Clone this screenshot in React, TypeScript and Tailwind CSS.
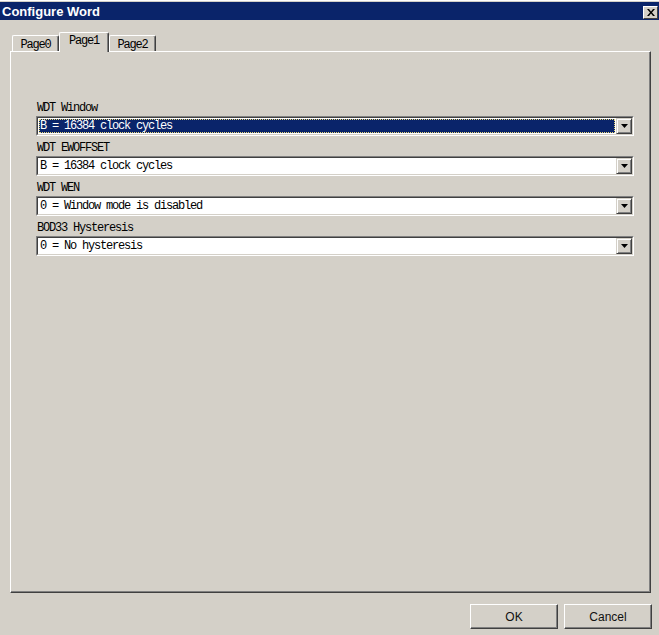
import React from "react";

type Campo = {
  rotulo: string;
  valor: string;
  selecionado?: boolean;
};

const campos: Campo[] = [
  { rotulo: "WDT Window", valor: "B = 16384 clock cycles", selecionado: true },
  { rotulo: "WDT EWOFFSET", valor: "B = 16384 clock cycles" },
  { rotulo: "WDT WEN", valor: "0 = Window mode is disabled" },
  { rotulo: "BOD33 Hysteresis", valor: "0 = No hysteresis" },
];

const mono = "font-['Liberation_Mono',monospace] text-[12px] tracking-[-1.2px]";

const Seta = () => (
  <div className="w-[16px] h-[16px] bg-[#d4d0c8] border-t border-l border-[#d4d0c8] border-r border-b border-r-[#404040] border-b-[#404040] shadow-[inset_1px_1px_0_#ffffff,inset_-1px_-1px_0_#808080] flex items-center justify-center">
    <svg width="7" height="4" viewBox="0 0 7 4">
      <path d="M0 0h7L3.5 4z" fill="#000" />
    </svg>
  </div>
);

const Combo = ({ campo }: { campo: Campo }) => (
  <div className="w-[598px] h-[20px] border-t border-l border-[#808080] border-r border-b border-r-white border-b-white">
    <div className="h-full border-t border-l border-[#404040] border-r border-b border-r-[#d4d0c8] border-b-[#d4d0c8] bg-white flex">
      <div className="flex-1 p-px">
        <div
          className={`h-full flex items-center pl-[1px] ${mono} ${
            campo.selecionado
              ? "bg-[#0a246a] text-white outline outline-1 outline-dotted outline-[#e8d67a] -outline-offset-1"
              : "text-black"
          }`}
        >
          {campo.valor}
        </div>
      </div>
      <Seta />
    </div>
  </div>
);

const Aba = ({ nome, ativa, w }: { nome: string; ativa?: boolean; w: string }) => (
  <div
    className={`${w} ${
      ativa ? "h-[20px] relative z-10 bg-[#d4d0c8] pt-[3px]" : "h-[17px] pt-[3px]"
    } border-t border-l border-white border-r border-r-[#404040] rounded-t-[2px] shadow-[inset_-1px_0_0_#808080] flex justify-center ${mono} leading-[11px] text-black`}
  >
    <span className={ativa ? "" : "pt-[1px]"}>{nome}</span>
  </div>
);

const Botao = ({ texto }: { texto: string }) => (
  <button className="w-[88px] h-[25px] bg-[#d4d0c8] border-t border-l border-white border-r border-b border-r-[#404040] border-b-[#404040] shadow-[inset_-1px_-1px_0_#808080] font-['Liberation_Sans',sans-serif] text-[12px] text-[#111]">
    {texto}
  </button>
);

export default function App() {
  return (
    <div className="w-[659px] h-[635px] bg-[#d4d0c8] flex flex-col overflow-hidden">
      <div className="h-[2px] border-t border-white" />
      <div className="h-[18px] bg-[#0a246a] flex items-center justify-between pl-[2px] pr-[1px]">
        <span className="font-['Liberation_Sans',sans-serif] font-bold text-[13px] text-white leading-none">
          Configure Word
        </span>
        <div className="w-[15px] h-[13px] mt-[2px] bg-[#d4d0c8] border-t border-l border-white border-r border-b border-r-[#404040] border-b-[#404040] flex items-center justify-center">
          <svg width="8" height="7" viewBox="0 0 8 7">
            <path d="M0 0h2l2 2.5L6 0h2L5 3.5 8 7H6L4 4.5 2 7H0l3-3.5z" fill="#000" />
          </svg>
        </div>
      </div>

      <div className="mt-[12px] ml-[12px] flex items-end h-[20px] -mb-px">
        <Aba nome="Page0" w="w-[47px]" />
        <Aba nome="Page1" w="w-[50px]" ativa />
        <Aba nome="Page2" w="w-[47px]" />
      </div>

      <div className="ml-[10px] w-[641px] h-[542px] border-t border-l border-white border-r border-b border-r-[#404040] border-b-[#404040] shadow-[inset_-1px_-1px_0_#808080] pt-[49px] pl-[25px]">
        <div className="flex flex-col gap-[5px]">
          {campos.map((campo) => (
            <div key={campo.rotulo} className="flex flex-col gap-[3px]">
              <span className={`${mono} leading-[14px] h-[12px] text-black pl-[1px]`}>
                {campo.rotulo}
              </span>
              <Combo campo={campo} />
            </div>
          ))}
        </div>
      </div>

      <div className="mt-[11px] flex justify-end gap-[6px] pr-[7px]">
        <Botao texto="OK" />
        <Botao texto="Cancel" />
      </div>
    </div>
  );
}
